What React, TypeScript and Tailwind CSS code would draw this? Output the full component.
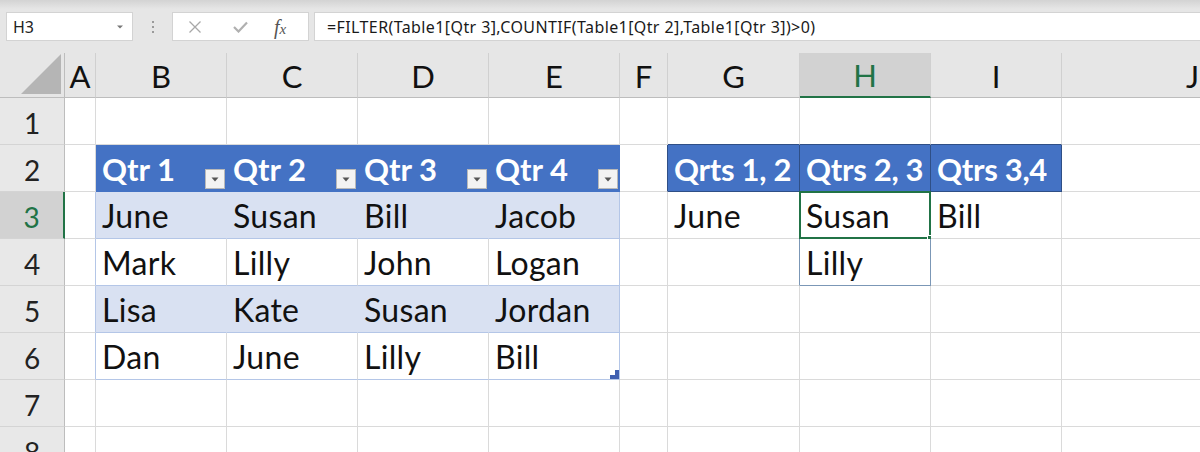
import React from "react";

const GRID = "border-[#dadada]";

const cols = ["A", "B", "C", "D", "E", "F", "G", "H", "I", "J"];

function DropBtn() {
  return (
    <div className="w-[20px] h-[20px] mb-[2px] mr-[1px] shrink-0 bg-[#f3f3f3] border border-[#b9b9b9] flex items-center justify-center">
      <svg width="8" height="5" viewBox="0 0 8 5">
        <path d="M0.5 0.5 L7.5 0.5 L4 4.5 Z" fill="#555" />
      </svg>
    </div>
  );
}

export default function App() {
  const table: string[][] = [
    ["June", "Susan", "Bill", "Jacob"],
    ["Mark", "Lilly", "John", "Logan"],
    ["Lisa", "Kate", "Susan", "Jordan"],
    ["Dan", "June", "Lilly", "Bill"],
  ];

  const cellFont = "font-['Lato','Liberation_Sans',sans-serif]";

  const rows: React.ReactNode[] = [];
  for (let r = 1; r <= 8; r++) {
    const isSelRow = r === 3;
    rows.push(
      <div
        key={`rh${r}`}
        className={`flex items-center justify-center border-b border-[#d4d4d4] ${
          isSelRow
            ? "bg-[#d2d2d2] border-r-2 border-r-[#217346] text-[#217346]"
            : "bg-[#e8e8e8] border-r border-r-[#bdbdbd] text-[#222]"
        } text-[28px] leading-none pt-[4px] ${cellFont}`}
      >
        {r}
      </div>
    );
    for (let c = 0; c < cols.length; c++) {
      const col = cols[c];
      let cls = `bg-white border-r border-b ${GRID}`;
      let text: string | undefined;
      let textCls = "text-[#111] text-[32px] tracking-[0.3px]";
      let extra: React.ReactNode = null;
      let btn = false;

      if (c >= 1 && c <= 4) {
        if (r === 2) {
          cls = "bg-[#4472c4] border-r border-r-[#4472c4] border-b border-b-[#4472c4]";
          text = `Qtr ${c}`;
          textCls = "text-white font-bold text-[31px] tracking-[0px]";
          btn = true;
        } else if (r >= 3 && r <= 6) {
          const banded = r === 3 || r === 5;
          text = table[r - 3][c - 1];
          const rightEdge = c === 4;
          cls = `${banded ? "bg-[#d9e1f2]" : "bg-white"} border-b border-b-[#b4c6e7] border-r ${
            rightEdge ? "border-r-[#b4c6e7]" : banded ? "border-r-[#d9e1f2]" : "border-r-[#dadada]"
          }`;
          if (r === 6 && c === 4) {
            extra = (
              <svg
                className="absolute right-[0px] bottom-[0px]"
                width="9"
                height="9"
                viewBox="0 0 9 9"
              >
                <path d="M9 0 L9 9 L0 9 L0 5 L5 5 L5 0 Z" fill="#3f5fb0" />
              </svg>
            );
          }
        }
      }
      if (c === 0 && r >= 3 && r <= 6) {
        cls = "bg-white border-b border-b-[#dadada] border-r border-r-[#b4c6e7]";
      }
      if (r === 1 && c >= 6 && c <= 8) {
        cls = `bg-white border-r ${GRID} border-b border-b-[#2f4f86]`;
      }
      if (r === 2 && c === 5) {
        cls = `bg-white border-b ${GRID} border-r border-r-[#2f4f86]`;
      }
      if (r === 2 && c >= 6 && c <= 8) {
        cls = "bg-[#4472c4] border-r border-b border-[#2f4f86]";
        text = ["Qrts 1, 2", "Qtrs 2, 3", "Qtrs 3,4"][c - 6];
        textCls = "text-white font-bold text-[31px] tracking-[-0.3px]";
      }
      if (r === 3 && c === 6) text = "June";
      if (r === 3 && c === 7) {
        text = "Susan";
        cls = "bg-white border-r border-b border-[#7b97b6]";
        extra = (
          <>
            <div className="absolute left-[-1px] top-[-1px] right-[-1px] bottom-[-1px] border-2 border-[#217346] pointer-events-none" />
            <div className="absolute right-[-4px] bottom-[-4px] w-[7px] h-[7px] bg-[#217346] border border-white" />
          </>
        );
      }
      if (r === 3 && c === 8) text = "Bill";
      if (r === 4 && c === 6) {
        cls = `bg-white border-b ${GRID} border-r border-r-[#7b97b6]`;
      }
      if (r === 4 && c === 7) {
        text = "Lilly";
        cls = "bg-white border-r border-b border-[#7b97b6]";
      }

      rows.push(
        <div
          key={`${col}${r}`}
          className={`relative flex items-end justify-between min-w-0 ${cls}`}
        >
          {text !== undefined && (
            <span
              className={`pl-[6px] pb-[3px] leading-[38px] whitespace-nowrap overflow-hidden ${cellFont} ${textCls}`}
            >
              {text}
            </span>
          )}
          {btn && <DropBtn />}
          {extra}
        </div>
      );
    }
  }

  return (
    <div className="w-[1200px] h-[452px] overflow-hidden bg-white font-['Noto_Sans','Liberation_Sans',sans-serif]">
      {/* Formula bar */}
      <div className="h-[53px] flex items-start pt-[12px] pl-[6px] bg-[linear-gradient(to_bottom,#d3d3d3_0px,#e6e6e6_9px,#e6e6e6_100%)]">
        <div className="w-[127px] h-[29px] bg-white border border-[#d3d3d3] flex items-center justify-between pl-[6px] pr-[9px]">
          <span className="text-[16px] text-[#222] leading-none">H3</span>
          <svg width="6" height="4" viewBox="0 0 6 4">
            <path d="M0 0.5 L6 0.5 L3 3.5 Z" fill="#777" />
          </svg>
        </div>
        <div className="w-[39px] h-[29px] flex flex-col items-center justify-center gap-[3px]">
          <div className="w-[2px] h-[2px] bg-[#9a9a9a]" />
          <div className="w-[2px] h-[2px] bg-[#9a9a9a]" />
          <div className="w-[2px] h-[2px] bg-[#9a9a9a]" />
        </div>
        <div className="w-[137px] h-[29px] bg-white border border-[#d3d3d3] flex items-center">
          <svg className="ml-[15px]" width="14" height="14" viewBox="0 0 14 14">
            <path d="M1.5 1.5 L12.5 12.5 M12.5 1.5 L1.5 12.5" stroke="#a8a8a8" strokeWidth="1.3" fill="none" />
          </svg>
          <svg className="ml-[31px]" width="15" height="12" viewBox="0 0 15 12">
            <path d="M1 6 L5.5 10.5 L14 1.5" stroke="#b0b0b0" strokeWidth="2.2" fill="none" />
          </svg>
          <span className="ml-[26px] text-[20px] italic text-[#555] font-['Liberation_Serif',serif] leading-none">
            f<span className="text-[15px]">x</span>
          </span>
        </div>
        <div className="ml-[5px] flex-1 h-[29px] bg-white border-l border-y border-[#d3d3d3] flex items-center pl-[12px]">
          <span className="text-[16px] tracking-[0.4px] text-[#1a1a1a] whitespace-nowrap leading-none">
            =FILTER(Table1[Qtr 3],COUNTIF(Table1[Qtr 2],Table1[Qtr 3])&gt;0)
          </span>
        </div>
      </div>

      {/* Sheet */}
      <div className="grid grid-cols-[65px_31px_131px_131px_131px_131px_48px_132px_131px_131px_262px] grid-rows-[45px_repeat(8,47px)] w-[1324px]">
        <div className="bg-[#e6e6e6] border-r border-b border-r-[#bdbdbd] border-b-[#bdbdbd] flex items-end justify-end pr-[3px] pb-[3px]">
          <svg width="40" height="40" viewBox="0 0 40 40">
            <path d="M40 0 L40 40 L0 40 Z" fill="#b5b5b5" />
          </svg>
        </div>
        {cols.map((c) => {
          const sel = c === "H";
          return (
            <div
              key={`ch${c}`}
              className={`flex items-center justify-center border-r border-r-[#d0d0d0] text-[31px] leading-none pt-[2px] ${cellFont} ${
                sel
                  ? "bg-[#d2d2d2] border-b-2 border-b-[#217346] text-[#217346]"
                  : "bg-[#e6e6e6] border-b border-b-[#bdbdbd] text-[#111]"
              }`}
            >
              {c}
            </div>
          );
        })}
        {rows}
      </div>
    </div>
  );
}
